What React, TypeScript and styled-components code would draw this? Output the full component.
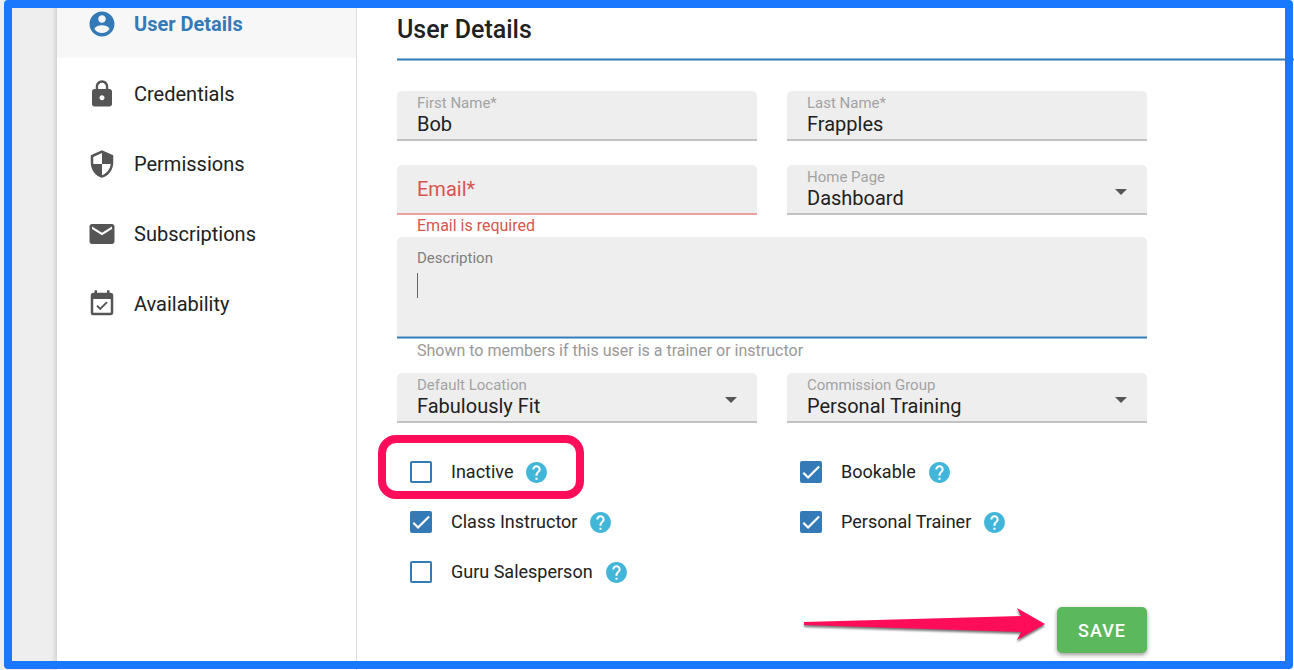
import React from "react";
import styled, { createGlobalStyle, css } from "styled-components";
import { MdEmail, MdEventAvailable, MdHelp, MdLock } from "react-icons/md";

const blue = "#337ab7";
const red = "#d9534f";
const pink = "#ff0c5a";

const GlobalStyle = createGlobalStyle`
  *, *::before, *::after { box-sizing: border-box; }
  body {
    margin: 0;
    overflow: hidden;
    background: #eeeeee;
    color: #212121;
    font-family: Roboto, "Liberation Sans", sans-serif;
  }
`;

const Page = styled.div`
  position: relative;
  display: flex;
  min-height: 100vh;
  padding-left: 57px;
  overflow: hidden;
`;

const Frame = styled.div`
  position: absolute;
  inset: 0 1px 1px 4px;
  border: 8px solid #1a78ff;
  border-radius: 4px;
  pointer-events: none;
`;

const Card = styled.div`
  display: flex;
  flex: 1;
  background: #ffffff;
  box-shadow: 0 0 6px rgba(0, 0, 0, 0.24);
`;

const Sidebar = styled.nav`
  flex: 0 0 300px;
  border-right: 1px solid #dcdcdc;
`;

const NavList = styled.ul`
  margin: -12px 0 0;
  padding: 0;
  list-style: none;
`;

const NavLink = styled.a<{ $active?: boolean }>`
  display: flex;
  align-items: center;
  gap: 17px;
  height: 70px;
  padding: 2px 30px 0;
  font-size: 20px;
  line-height: 24px;
  color: #212121;
  text-decoration: none;

  svg {
    width: 30px;
    height: 30px;
    fill: #555555;
  }

  ${({ $active }) =>
    $active &&
    css`
      background: #f7f7f7;
      color: ${blue};
      font-weight: 700;

      svg {
        fill: ${blue};
      }
    `}
`;

const Content = styled.main`
  flex: 1;
  min-width: 0;
  padding: 14px 0 0 40px;
`;

const Title = styled.h1`
  margin: 0;
  font-size: 25px;
  line-height: 32px;
  font-weight: 500;
`;

const Divider = styled.hr`
  height: 3px;
  margin: 12px 0 30px;
  border: solid #94bbdc;
  border-width: 1px 0;
  background: ${blue};
`;

const Form = styled.form`
  max-width: 750px;
`;

const Row = styled.div<{ $space: number }>`
  display: grid;
  grid-template-columns: 1fr 1fr;
  gap: 30px;
  align-items: start;
  margin-bottom: ${({ $space }) => $space}px;
`;

const Field = styled.div<{ $invalid?: boolean }>`
  position: relative;
  display: flex;
  flex-direction: column;
  height: 50px;
  padding: 3px 20px 0;
  border-bottom: 2px solid ${({ $invalid }) => ($invalid ? "#e9a3a1" : "#c2c2c2")};
  border-radius: 5px 5px 0 0;
  background: #eeeeee;
`;

const Label = styled.label`
  font-size: 15px;
  line-height: 18px;
  color: #a3a3a3;
`;

const control = css`
  width: 100%;
  margin: 0;
  padding: 0;
  border: 0;
  outline: 0;
  background: transparent;
  color: #212121;
  font: inherit;
  font-size: 20px;
  line-height: 24px;
`;

const Input = styled.input`
  ${control}
  height: 24px;
`;

const RestingField = styled(Field)`
  display: grid;
  align-items: center;
  padding: 0 20px;
`;

const RestingLabel = styled.label`
  grid-area: 1 / 1;
  font-size: 20px;
  line-height: 24px;
  color: ${red};
`;

const RestingInput = styled(Input)`
  grid-area: 1 / 1;
`;

const Select = styled.select`
  ${control}
  height: 24px;
  appearance: none;
`;

const Caret = styled.svg`
  position: absolute;
  right: 20px;
  top: 24px;
  width: 12px;
  height: 6px;
  fill: #555555;
  pointer-events: none;
`;

const Helper = styled.p<{ $error?: boolean }>`
  margin: 0;
  padding: 0 20px;
  font-size: 16px;
  line-height: 22px;
  color: ${({ $error }) => ($error ? red : "#999999")};
`;

const AreaField = styled.div`
  position: relative;
  padding: 12px 20px 0;
  border-radius: 5px 5px 0 0;
  background: #eeeeee;

  label {
    display: block;
    color: #808080;
  }
`;

const TextArea = styled.textarea`
  ${control}
  display: block;
  height: 69px;
  padding-top: 5px;
  resize: none;
  caret-color: transparent;
`;

const TextCursor = styled.span`
  position: absolute;
  left: 20px;
  top: 36px;
  width: 1px;
  height: 25px;
  background: #666666;
  pointer-events: none;
`;

const AreaLine = styled(Divider)`
  margin: 0 0 1px;
`;

const AreaBlock = styled.div`
  margin-bottom: 11px;
`;

const Options = styled.div`
  display: grid;
  grid-template-columns: 1fr 1fr;
  column-gap: 30px;
`;

const Option = styled.div`
  position: relative;
  display: flex;
  align-items: center;
  height: 50px;
  padding-left: 13px;
`;

const Box = styled.span`
  display: grid;
  margin-right: 19px;

  svg {
    grid-area: 1 / 1;
    width: 22px;
    height: 22px;
    padding: 2px;
    fill: none;
    stroke: #ffffff;
    stroke-width: 3;
    pointer-events: none;
  }
`;

const Checkbox = styled.input`
  grid-area: 1 / 1;
  width: 22px;
  height: 22px;
  margin: 0;
  border: 2px solid ${blue};
  border-radius: 2px;
  appearance: none;

  &:checked {
    background: ${blue};
  }

  &:not(:checked) + svg {
    visibility: hidden;
  }
`;

const OptionLabel = styled.label`
  font-size: 18px;
  line-height: 24px;
`;

const HelpButton = styled.button`
  display: flex;
  margin: 0 0 0 11px;
  padding: 1px 0 0;
  border: 0;
  background: none;

  svg {
    width: 25px;
    height: 25px;
    fill: #42b6d8;
  }
`;

const Highlight = styled.span`
  position: absolute;
  left: -19px;
  top: -12px;
  width: 206px;
  height: 64px;
  border: 8px solid ${pink};
  border-radius: 18px;
  pointer-events: none;
`;

const Actions = styled.div`
  display: flex;
  justify-content: flex-end;
  gap: 12px;
  margin-top: 10px;
`;

const Arrow = styled.svg`
  width: 241px;
  height: 46px;
  overflow: visible;
  fill: ${pink};
  filter: drop-shadow(0 2px 1px rgba(0, 0, 0, 0.55));
`;

const SaveButton = styled.button`
  width: 90px;
  height: 46px;
  padding: 0;
  border: 0;
  border-radius: 5px;
  background: #5cb85c;
  box-shadow: 0 2px 4px rgba(0, 0, 0, 0.4);
  color: #ffffff;
  font: inherit;
  font-size: 18px;
  font-weight: 500;
  letter-spacing: 1px;
`;

const AccountIcon = () => (
  <svg viewBox="0 0 24 24" aria-hidden="true">
    <path d="M12 2C6.48 2 2 6.48 2 12s4.48 10 10 10 10-4.48 10-10S17.52 2 12 2zm0 3c1.66 0 3 1.34 3 3s-1.34 3-3 3-3-1.34-3-3 1.34-3 3-3zm0 14.2c-2.5 0-4.71-1.28-6-3.22.03-1.99 4-3.08 6-3.08 1.99 0 5.97 1.09 6 3.08-1.29 1.94-3.5 3.22-6 3.22z" />
  </svg>
);

const ShieldIcon = () => (
  <svg viewBox="0 0 24 24" aria-hidden="true">
    <path d="M12 1L3 5v6c0 5.55 3.84 10.74 9 12 5.16-1.26 9-6.45 9-12V5l-9-4zm0 10.99h7c-.53 4.12-3.28 7.79-7 8.94V12H5V6.3l7-3.11v8.8z" />
  </svg>
);

const navItems = [
  { label: "User Details", icon: <AccountIcon />, active: true },
  { label: "Credentials", icon: <MdLock /> },
  { label: "Permissions", icon: <ShieldIcon /> },
  { label: "Subscriptions", icon: <MdEmail /> },
  { label: "Availability", icon: <MdEventAvailable /> },
];

const options = [
  { id: "inactive", label: "Inactive", checked: false, highlighted: true },
  { id: "bookable", label: "Bookable", checked: true },
  { id: "instructor", label: "Class Instructor", checked: true },
  { id: "trainer", label: "Personal Trainer", checked: true },
  { id: "guru", label: "Guru Salesperson", checked: false },
];

function TextField({ id, label, value }: { id: string; label: string; value: string }) {
  return (
    <Field>
      <Label htmlFor={id}>{label}</Label>
      <Input id={id} defaultValue={value} required />
    </Field>
  );
}

function SelectField({ id, label, value }: { id: string; label: string; value: string }) {
  return (
    <Field>
      <Label htmlFor={id}>{label}</Label>
      <Select id={id} defaultValue={value}>
        <option>{value}</option>
      </Select>
      <Caret viewBox="0 0 12 6" aria-hidden="true">
        <path d="M0 0h12L6 6z" />
      </Caret>
    </Field>
  );
}

export default function App() {
  return (
    <Page>
      <GlobalStyle />
      <Card>
        <Sidebar>
          <NavList>
            {navItems.map((item) => (
              <li key={item.label}>
                <NavLink href="#" $active={item.active}>
                  {item.icon}
                  {item.label}
                </NavLink>
              </li>
            ))}
          </NavList>
        </Sidebar>
        <Content>
          <Title>User Details</Title>
          <Divider />
          <Form noValidate onSubmit={(e) => e.preventDefault()}>
            <Row $space={24}>
              <TextField id="first-name" label="First Name*" value="Bob" />
              <TextField id="last-name" label="Last Name*" value="Frapples" />
            </Row>
            <Row $space={0}>
              <div>
                <RestingField $invalid>
                  <RestingLabel htmlFor="email">Email*</RestingLabel>
                  <RestingInput id="email" type="email" required aria-describedby="email-error" />
                </RestingField>
                <Helper id="email-error" $error>
                  Email is required
                </Helper>
              </div>
              <SelectField id="home-page" label="Home Page" value="Dashboard" />
            </Row>
            <AreaBlock>
              <AreaField>
                <Label htmlFor="description">Description</Label>
                <TextArea id="description" autoFocus aria-describedby="description-hint" />
                <TextCursor />
              </AreaField>
              <AreaLine />
              <Helper id="description-hint">
                Shown to members if this user is a trainer or instructor
              </Helper>
            </AreaBlock>
            <Row $space={24}>
              <SelectField id="location" label="Default Location" value="Fabulously Fit" />
              <SelectField id="commission" label="Commission Group" value="Personal Training" />
            </Row>
            <Options>
              {options.map((option) => (
                <Option key={option.id}>
                  <Box>
                    <Checkbox type="checkbox" id={option.id} defaultChecked={option.checked} />
                    <svg viewBox="0 0 24 24" aria-hidden="true">
                      <path d="M1.73 12.91 8.1 19.28 22.79 4.59" />
                    </svg>
                  </Box>
                  <OptionLabel htmlFor={option.id}>{option.label}</OptionLabel>
                  <HelpButton type="button" aria-label={`Help: ${option.label}`}>
                    <MdHelp />
                  </HelpButton>
                  {option.highlighted && <Highlight />}
                </Option>
              ))}
            </Options>
            <Actions>
              <Arrow viewBox="0 0 241 46" aria-hidden="true">
                <path d="M0 15 217 9 213 1 241 17 213 33 217 25 0 18z" />
              </Arrow>
              <SaveButton type="submit">SAVE</SaveButton>
            </Actions>
          </Form>
        </Content>
      </Card>
      <Frame />
    </Page>
  );
}
